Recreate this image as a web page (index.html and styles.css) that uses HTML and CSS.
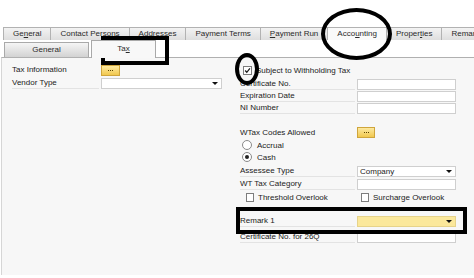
FILE: index.html
```html
<!DOCTYPE html>
<html>
<head>
<meta charset="utf-8">
<link rel="stylesheet" href="styles.css">
</head>
<body>
<div class="screen">
  <div class="topspace"></div>
  <div class="tabs main">
    <div class="tab">Ge<u>n</u>eral</div>
    <div class="tab">Contact Persons</div>
    <div class="tab">Addresses</div>
    <div class="tab">Payment Terms</div>
    <div class="tab"><u>P</u>ayment Run</div>
    <div class="tab active">Acco<u>u</u>nting</div>
    <div class="tab">Proper<u>t</u>ies</div>
    <div class="tab">Remarks</div>
  </div>
  <div class="tabs sub">
    <div class="stab gen">General</div>
    <div class="stab tax active">Ta<u>x</u></div>
  </div>
  <div class="panel">
    <div class="col left">
      <div class="row first">
        <div class="lbl">Tax Information</div>
        <div class="ybtn"><i></i><i></i><i></i></div>
      </div>
      <div class="row r-vendor">
        <div class="lbl line">Vendor Type</div>
        <div class="field wide drop"><span class="arrow"></span></div>
      </div>
    </div>
    <div class="col right">
      <div class="row first">
        <span class="cbox checked"><svg viewBox="0 0 9 9" width="9" height="9"><path d="M1.5 4.5 L3.6 6.8 L7.6 1.8" fill="none" stroke="#1a1a1a" stroke-width="1.6"/></svg></span>
        <span class="ctext">Subject to Withholding Tax</span>
      </div>
      <div class="row r-cert">
        <div class="lbl line">Certificate No.</div>
        <div class="field"></div>
      </div>
      <div class="row">
        <div class="lbl line">Expiration Date</div>
        <div class="field"></div>
      </div>
      <div class="row">
        <div class="lbl line">NI Number</div>
        <div class="field"></div>
      </div>
      <div class="row r-wtax">
        <div class="lbl">WTax Codes Allowed</div>
        <div class="ybtn"><i></i><i></i><i></i></div>
      </div>
      <div class="row">
        <span class="radio"></span><span class="rtext">Accrual</span>
      </div>
      <div class="row">
        <span class="radio on"></span><span class="rtext">Cash</span>
      </div>
      <div class="row r-ass">
        <div class="lbl line">Assessee Type</div>
        <div class="field drop">Company<span class="arrow"></span></div>
      </div>
      <div class="row r-wtc">
        <div class="lbl line">WT Tax Category</div>
        <div class="field"></div>
      </div>
      <div class="row r-thr">
        <div class="chk-cell"><span class="cbox"></span><span class="ctext">Threshold Overlook</span></div>
        <div class="chk-cell"><span class="cbox"></span><span class="ctext">Surcharge Overlook</span></div>
      </div>
      <div class="row r-rem">
        <div class="lbl line">Remark 1</div>
        <div class="field drop yellow"><span class="arrow"></span></div>
      </div>
      <div class="row r-26q">
        <div class="lbl line">Certificate No. for 26Q</div>
        <div class="field"></div>
      </div>
    </div>
  </div>
  <div class="mark ell-acc"></div>
  <div class="mark ell-chk"></div>
  <div class="mark rect-tax"></div>
  <div class="mark rect-rem"></div>
</div>
</body>
</html>
```
FILE: styles.css
```css
* { box-sizing: border-box; }
html, body { margin: 0; padding: 0; background: #fff; }
body {
  font-family: "Liberation Sans", Arial, sans-serif;
  font-size: 8px;
  color: #222;
}
.screen {
  position: relative;
  width: 474px;
  height: 278px;
  overflow: hidden;
  background: #fff;
}
.topspace { height: 27px; }
u { text-decoration: underline; text-underline-offset: 1px; }

.tabs { display: flex; white-space: nowrap; }
.tabs.main { padding-left: 3px; height: 13px; overflow: hidden; }
.tab {
  flex: none;
  height: 13px;
  line-height: 12px;
  padding: 0 9px;
  border: 1px solid #b2b2b2;
  border-right: none;
  border-bottom: none;
  background: linear-gradient(#f3f3f3, #dedede);
  color: #2a2a2a;
}
.tab.active { background: #fafafa; }

.tabs.sub {
  margin-top: 2px;
  padding-left: 4px;
  height: 15px;
  align-items: flex-end;
  gap: 2px;
}
.stab {
  flex: none;
  height: 15px;
  line-height: 13px;
  text-align: center;
  border: 1px solid #a9a9a9;
  border-bottom: none;
  background: linear-gradient(#f5f5f5, #d2d2d2);
  color: #2a2a2a;
}
.stab.gen { width: 85px; }
.stab.tax {
  width: 65px;
  height: 18px;
  line-height: 16px;
  margin-bottom: -1px;
  background: #f8f8f8;
  position: relative;
  z-index: 1;
}

.panel {
  margin-left: 1px;
  height: 218px;
  border-top: 1px solid #b0b0b0;
  border-left: 1px solid #d6d6d6;
  background: #f7f7f7;
  display: grid;
  grid-template-columns: 238px 1fr;
  padding-top: 6px;
}
.col.left { padding-left: 10px; }
.row {
  display: flex;
  align-items: center;
  height: 12px;
}
.lbl {
  flex: none;
  height: 12px;
  line-height: 11px;
  white-space: nowrap;
}
.left .lbl { width: 89px; }
.right .lbl { width: 117px; padding-right: 2px; }
.lbl.line { background: linear-gradient(to right, #e3e3e3, #e3e3e3) no-repeat left bottom / calc(100% - 2px) 1px; }

.r-vendor { margin-top: 1px; }
.r-cert { margin-top: 2px; }
.r-wtax { margin-top: 13px; }
.r-ass { margin-top: 2px; }
.r-wtc { margin-top: 1px; }
.r-thr { margin-top: 1px; }
.r-rem { margin-top: 12px; }
.r-26q { margin-top: 4px; }

.field {
  position: relative;
  width: 99px;
  height: 11px;
  background: #fff;
  border: 1px solid #cfcfcf;
  line-height: 9px;
  padding-left: 2px;
}
.field.wide { width: 121px; }
.field.yellow { background: #fbe89b; border-color: #e6d38a; }
.arrow {
  position: absolute;
  right: 3px;
  top: 3px;
  width: 0;
  height: 0;
  border-left: 3px solid transparent;
  border-right: 3px solid transparent;
  border-top: 3px solid #111;
}

.ybtn {
  flex: none;
  width: 19px;
  height: 11px;
  background: linear-gradient(#fde9a0, #f1c84f);
  border: 1px solid #cfa53c;
  display: flex;
  align-items: center;
  justify-content: center;
  gap: 1px;
}
.ybtn i {
  display: block;
  width: 1px;
  height: 1px;
  background: #5a4200;
}
.right .ybtn { width: 18px; margin-top: -1px; }

.cbox {
  flex: none;
  width: 9px;
  height: 9px;
  border: 1px solid #7d7d7d;
  background: #fff;
  display: flex;
  align-items: center;
  justify-content: center;
}
.cbox svg { display: block; }
.first .cbox { margin-left: 3px; }
.ctext { margin-left: 4px; white-space: nowrap; }

.radio {
  flex: none;
  width: 10px;
  height: 10px;
  margin-left: 2px;
  border: 1px solid #8a8a8a;
  border-radius: 50%;
  background: #fff;
  display: flex;
  align-items: center;
  justify-content: center;
}
.radio.on::after {
  content: "";
  width: 4px;
  height: 4px;
  border-radius: 50%;
  background: #222;
}
.rtext { margin-left: 5px; }

.r-thr { padding-left: 6px; }
.chk-cell { display: flex; align-items: center; width: 115px; }
.chk-cell .cbox { width: 8px; height: 9px; }

.mark {
  position: absolute;
  border: 4px solid #000;
  pointer-events: none;
}
.ell-acc { left: 321px; top: 8px; width: 71px; height: 52px; border-radius: 50%; }
.ell-chk { left: 235px; top: 53px; width: 24px; height: 32px; border-radius: 50%; }
.rect-tax { left: 101px; top: 36px; width: 68px; height: 29px; }
.rect-rem { left: 236px; top: 207px; width: 231px; height: 27px; }
```
